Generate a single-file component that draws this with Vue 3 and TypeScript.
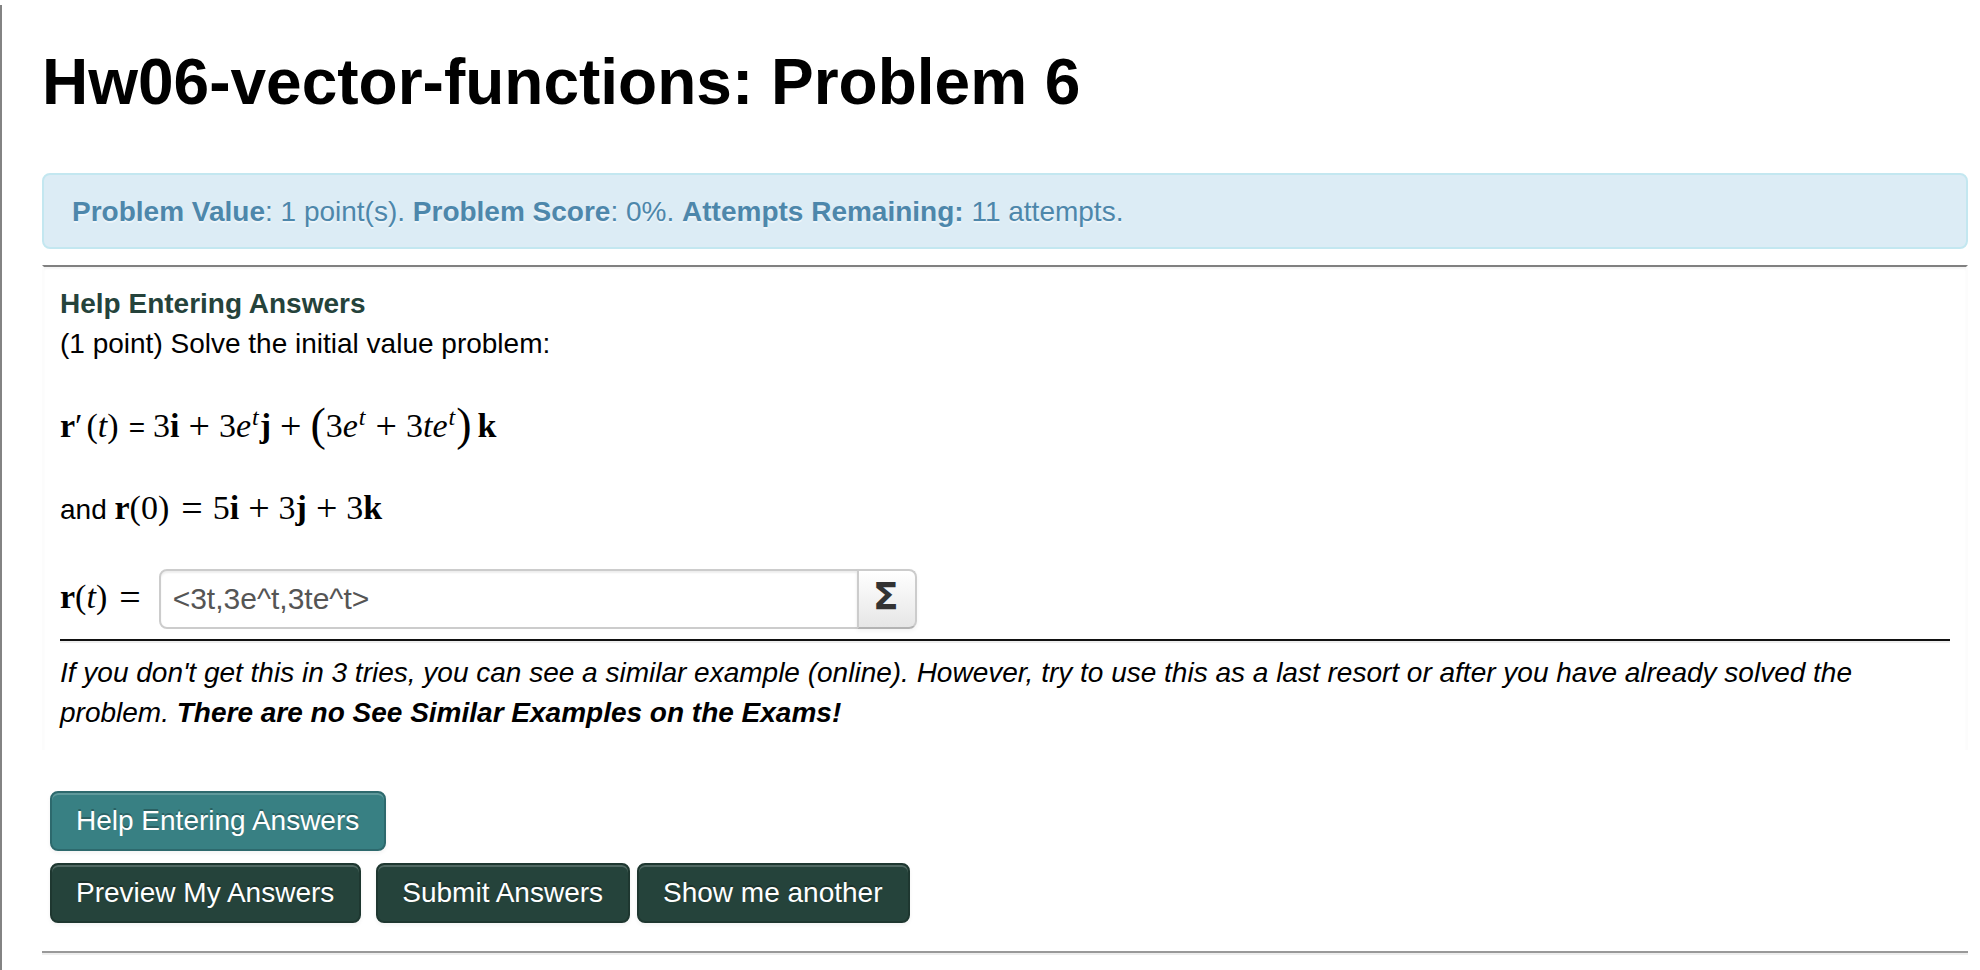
<script setup lang="ts">
import { ref } from 'vue'

const answer = ref('<3t,3e^t,3te^t>')
</script>

<template>
  <main class="page">
    <h1>Hw06-vector-functions: Problem 6</h1>

    <div class="alert">
      <b>Problem Value</b>: 1 point(s). <b>Problem Score</b>: 0%. <b>Attempts Remaining:</b> 11 attempts.
    </div>

    <form @submit.prevent>
      <section class="problem">
        <a class="help-link" href="#help">Help Entering Answers</a>
        <p class="intro">(1 point) Solve the initial value problem:</p>

        <p class="row">
          <span class="math"><b>r</b><span class="prime">′</span>(<i>t</i>)</span>
          <span class="eq-text">=</span>
          <span class="math">3<b>i</b><span class="op">+</span>3<i>e</i><i class="sup">t</i><b>j</b><span class="op">+</span><span class="big">(</span>3<i>e</i><i class="sup">t</i><span class="op">+</span>3<i>te</i><i class="sup">t</i><span class="big close">)</span><b>k</b></span>
        </p>

        <p class="row">
          and
          <span class="math"><b>r</b>(0)<span class="rel">=</span>5<b>i</b><span class="op">+</span>3<b>j</b><span class="op">+</span>3<b>k</b></span>
        </p>

        <div class="answer">
          <label class="math" for="answer"><b>r</b>(<i>t</i>)<span class="rel">=</span></label>
          <input id="answer" v-model="answer" type="text" spellcheck="false" autocomplete="off" />
          <button class="sigma" type="button" aria-label="Equation editor">Σ</button>
        </div>

        <hr class="dark" />

        <p class="note">
          If you don't get this in 3 tries, you can see a similar example (online). However, try to use this as a
          last resort or after you have already solved the problem.
          <b>There are no See Similar Examples on the Exams!</b>
        </p>
      </section>

      <div class="actions">
        <button class="btn teal" type="button">Help Entering Answers</button>
        <div class="group">
          <button class="btn first" type="button">Preview My Answers</button>
          <button class="btn" type="submit">Submit Answers</button>
          <button class="btn" type="button">Show me another</button>
        </div>
      </div>
    </form>

    <hr />
  </main>
</template>

<style>
body {
  background: #fff;
}
</style>

<style scoped>
.page {
  box-sizing: border-box;
  min-height: calc(100vh - 5px);
  margin-top: 5px;
  padding: 37px 12px 0 40px;
  border-left: 2px solid #838383;
  color: #000;
  font: 28px/40px "Helvetica Neue", "Liberation Sans", Arial, sans-serif;
}

h1 {
  margin: 0 0 51px;
  font-size: 64px;
  line-height: 80px;
  font-weight: 700;
}

.alert {
  padding: 17px 28px 15px;
  border: 2px solid #c3e7f0;
  border-radius: 8px;
  background: #dcecf5;
  color: #4d87ab;
  text-shadow: 0 2px 0 rgba(255, 255, 255, 0.5);
}

.problem {
  margin-top: 16px;
  padding: 17px 16px;
  border: 2px solid #fcfcfc;
  border-top-color: #808080;
  border-bottom: 0;
  box-shadow: inset 0 2px 2px #f5f5f5;
}

.help-link {
  color: #25433b;
  font-weight: 700;
  text-decoration: none;
}

p {
  margin: 0;
}

.row {
  height: 40px;
  margin-top: 42px;
  white-space: nowrap;
}

.eq-text {
  margin: 0 8px 0 10px;
}

.math {
  font-family: "Liberation Serif", "Times New Roman", serif;
  font-size: 34px;
  line-height: 40px;
}

.sup {
  margin: 0 1px;
  font-size: 24px;
  line-height: 0;
  vertical-align: 12px;
}

.prime {
  margin-right: 4px;
}

.op,
.rel {
  margin: 0 9px;
  font-size: 38px;
  line-height: 0;
  vertical-align: -2px;
}

.rel {
  margin: 0 10px 0 12px;
}

.big {
  font-size: 46px;
  line-height: 0;
  vertical-align: -3px;
}

.close {
  margin-right: 6px;
}

.answer {
  display: flex;
  align-items: center;
  margin-top: 41px;
}

.answer label {
  padding: 0 8px 4px 0;
}

input {
  box-sizing: border-box;
  width: 700px;
  height: 60px;
  padding: 0 12px;
  border: 2px solid #ccc;
  border-radius: 8px 0 0 8px;
  background: #fff;
  box-shadow: inset 0 2px 2px rgba(0, 0, 0, 0.07);
  color: #555;
  font: inherit;
  font-size: 30px;
}

.sigma {
  box-sizing: border-box;
  width: 60px;
  height: 60px;
  margin-left: -2px;
  padding: 0 2px 6px 0;
  border: 2px solid #ccc;
  border-bottom-color: #b3b3b3;
  border-radius: 0 8px 8px 0;
  background: linear-gradient(#fff, #e6e6e6);
  box-shadow: 0 2px 4px rgba(0, 0, 0, 0.05);
  color: #333;
  font: 700 38px/40px "DejaVu Sans", sans-serif;
}

hr {
  height: 2px;
  margin: 28px 0 0;
  border: 0;
  border-top: 2px solid #999;
  background: #eee;
}

hr.dark {
  margin: 10px 0;
  border-top-color: #111;
}

.note {
  font-style: italic;
}

.actions {
  display: flex;
  flex-direction: column;
  align-items: flex-start;
  gap: 12px;
  margin-top: 41px;
  padding-left: 8px;
}

.group {
  display: flex;
  gap: 7px;
}

.btn {
  height: 60px;
  padding: 0 25px 0 24px;
  border: 2px solid #1e3730;
  border-radius: 8px;
  background: #25433b;
  box-shadow: inset 0 2px 0 rgba(255, 255, 255, 0.2), 0 2px 4px rgba(0, 0, 0, 0.05);
  color: #fff;
  font: inherit;
  text-shadow: 0 -2px 0 rgba(0, 0, 0, 0.25);
}

.first {
  margin-right: 8px;
}

.teal {
  border-color: #2d696d;
  background: #388083;
}
</style>
